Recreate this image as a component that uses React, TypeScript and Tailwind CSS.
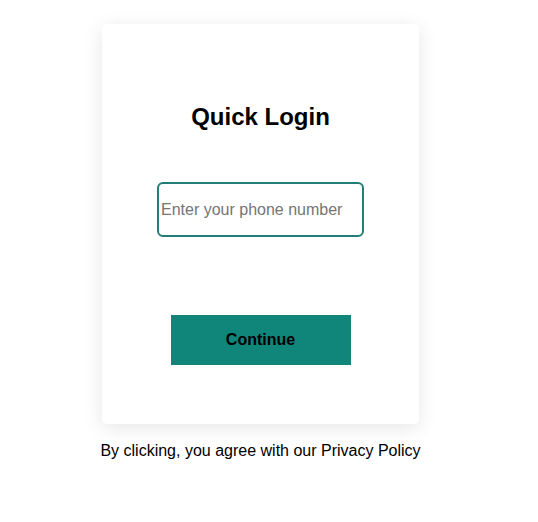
import React from 'react'

export default function App() {
  return (
    <div className="min-h-[522px] bg-white font-['Liberation_Sans',Arial,sans-serif]">
      <div className="w-[521px] pt-[24px] flex flex-col items-center">
        <div className="w-[317px] h-[400px] bg-white rounded-[5px] shadow-[0_4px_20px_rgba(0,0,0,0.1)] flex flex-col items-center pt-[79px]">
          <h1 className="text-[24px] leading-[28px] font-bold text-black">Quick Login</h1>
          <input
            type="tel"
            placeholder="Enter your phone number"
            className="mt-[51px] w-[207px] h-[55px] border-2 border-[#237e75] rounded-[6px] px-[2px] text-[16px] text-black placeholder:text-[#757575] outline-none"
          />
          <button className="mt-[78px] w-[180px] h-[50px] bg-[#10857a] text-black text-[16px] font-bold">
            Continue
          </button>
        </div>
        <p className="mt-[15px] text-[16px] leading-[24px] text-black">
          By clicking, you agree with our Privacy Policy
        </p>
      </div>
    </div>
  )
}
